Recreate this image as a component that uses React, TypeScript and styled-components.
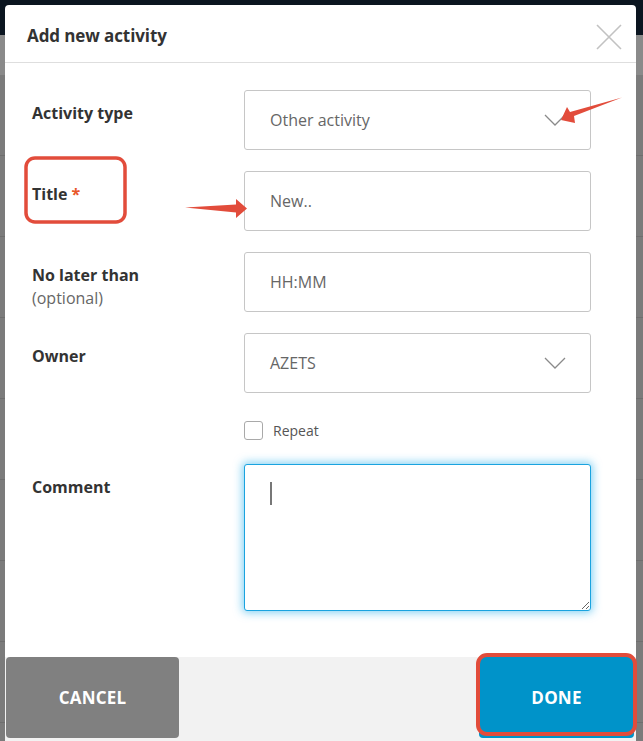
import React from "react";
import styled, { createGlobalStyle } from "styled-components";

const Global = createGlobalStyle`
  html, body { margin: 0; padding: 0; }
  body { font-family: "Open Sans", "Liberation Sans", sans-serif; overflow: hidden; }
  * { box-sizing: border-box; }
`;

const Page = styled.div`
  position: relative;
  width: 643px;
  height: 741px;
  overflow: hidden;
  padding: 5px 7px 0 5px;
  background:
    linear-gradient(#0b1520, #0b1520) 0 0 / 100% 35px no-repeat,
    linear-gradient(#8a8a8a, #8a8a8a) 0 35px / 100% 40px no-repeat,
    repeating-linear-gradient(180deg, #7b7b7b 0 80px, #6e6e6e 80px 81px) 0 75px / 100% 100% no-repeat,
    #7b7b7b;
`;

const Modal = styled.div`
  width: 631px;
  height: 736px;
  background: #ffffff;
  border-radius: 4px 4px 0 0;
  display: flex;
  flex-direction: column;
  overflow: hidden;
`;

const Header = styled.div`
  height: 58px;
  flex: 0 0 58px;
  border-bottom: 1px solid #dedede;
  display: flex;
  align-items: center;
  justify-content: space-between;
  padding: 3px 12px 0 22px;
`;

const Heading = styled.h1`
  margin: 0;
  font-size: 17px;
  font-weight: 700;
  color: #333333;
  letter-spacing: -0.1px;
`;

const CloseButton = styled.button`
  border: 0;
  background: none;
  padding: 0;
  width: 30px;
  height: 30px;
  display: flex;
  align-items: center;
  justify-content: center;
  margin-top: 3px;
`;

const Form = styled.div`
  display: grid;
  grid-template-columns: 212px 347px;
  row-gap: 21px;
  padding: 27px 0 0 27px;
`;

const Label = styled.div`
  font-size: 16px;
  font-weight: 700;
  color: #333333;
  line-height: 24px;
  padding-top: 11px;
`;

const Optional = styled.div`
  font-weight: 400;
  color: #666666;
  line-height: 22px;
`;

const Required = styled.span`
  color: #e8562a;
  margin-left: 4px;
`;

const Field = styled.div`
  position: relative;
  height: 60px;
  border: 1px solid #c6c6c6;
  border-radius: 3px;
  padding-left: 25px;
  display: flex;
  align-items: center;
  justify-content: space-between;
  padding-right: 24px;
  font-size: 16px;
  color: #666666;
  background: #fff;
`;

const CheckRow = styled.label`
  grid-column: 2;
  height: 29px;
  padding-top: 7px;
  display: flex;
  align-items: flex-start;
  gap: 10px;
  font-size: 14px;
  color: #555555;
  line-height: 19px;
`;

const CheckBox = styled.span`
  width: 19px;
  height: 19px;
  border: 1px solid #a9a9a9;
  border-radius: 3px;
  background: #fff;
`;

const TextAreaWrap = styled.div`
  position: relative;
  height: 147px;
`;

const TextArea = styled.textarea`
  width: 100%;
  height: 100%;
  border: 1px solid #1aa3df;
  border-radius: 3px;
  box-shadow: 0 0 8px 2px rgba(40, 175, 235, 0.55);
  outline: none;
  resize: vertical;
  font-family: inherit;
  font-size: 16px;
  padding: 18px 25px;
  display: block;
`;

const Caret = styled.span`
  position: absolute;
  left: 26px;
  top: 18px;
  width: 2px;
  height: 23px;
  background: #777;
`;

const Footer = styled.div`
  margin-top: auto;
  height: 84px;
  flex: 0 0 84px;
  background: #f2f2f2;
  display: flex;
  justify-content: space-between;
  padding: 0 2px 3px 1px;
`;

const FooterButton = styled.button<{ $variant: "cancel" | "done"; $width: number }>`
  width: ${(p) => p.$width}px;
  height: 81px;
  border: 0;
  border-radius: 4px;
  background: ${(p) => (p.$variant === "done" ? "#0093c9" : "#808080")};
  color: #ffffff;
  font-family: "Open Sans", "Liberation Sans", sans-serif;
  font-size: 17px;
  font-weight: 700;
  letter-spacing: 0.2px;
  padding: 0;
`;

const Overlay = styled.svg`
  position: absolute;
  left: 0;
  top: 0;
  pointer-events: none;
`;

const Chevron = () => (
  <svg width="22" height="12" viewBox="0 0 22 12">
    <path d="M1 1 L11 11 L21 1" fill="none" stroke="#8a8a8a" strokeWidth="1.3" />
  </svg>
);

export default function App() {
  return (
    <Page>
      <Global />
      <Modal>
        <Header>
          <Heading>Add new activity</Heading>
          <CloseButton aria-label="Close">
            <svg width="26" height="26" viewBox="0 0 26 26">
              <path d="M1 1 L25 25 M25 1 L1 25" stroke="#c2c2c2" strokeWidth="1.6" />
            </svg>
          </CloseButton>
        </Header>
        <Form>
          <Label>Activity type</Label>
          <Field>
            <span>Other activity</span>
            <Chevron />
          </Field>

          <Label>
            Title<Required>*</Required>
          </Label>
          <Field>
            <span>New..</span>
          </Field>

          <Label>
            No later than
            <Optional>(optional)</Optional>
          </Label>
          <Field>
            <span>HH:MM</span>
          </Field>

          <Label>Owner</Label>
          <Field>
            <span>AZETS</span>
            <Chevron />
          </Field>

          <CheckRow>
            <CheckBox />
            <span>Repeat</span>
          </CheckRow>

          <Label>Comment</Label>
          <TextAreaWrap>
            <TextArea aria-label="Comment" />
            <Caret />
          </TextAreaWrap>
        </Form>
        <Footer>
          <FooterButton $variant="cancel" $width={173}>CANCEL</FooterButton>
          <FooterButton $variant="done" $width={155}>DONE</FooterButton>
        </Footer>
      </Modal>
      <Overlay width="643" height="741" viewBox="0 0 643 741">
        <rect x="26" y="158" width="99" height="64" rx="9" fill="none" stroke="#e24c3b" strokeWidth="3.5" />
        <rect x="478" y="655" width="157" height="79" rx="9" fill="none" stroke="#e24c3b" strokeWidth="4" />
        <polygon points="185,207.5 236,204.5 236,199 247,208.5 236,218 236,212.5" fill="#e24c3b" />
        <polygon points="622,97.5 574,116 575,123 561,120 567,107 570,112" fill="#e24c3b" />
      </Overlay>
    </Page>
  );
}
